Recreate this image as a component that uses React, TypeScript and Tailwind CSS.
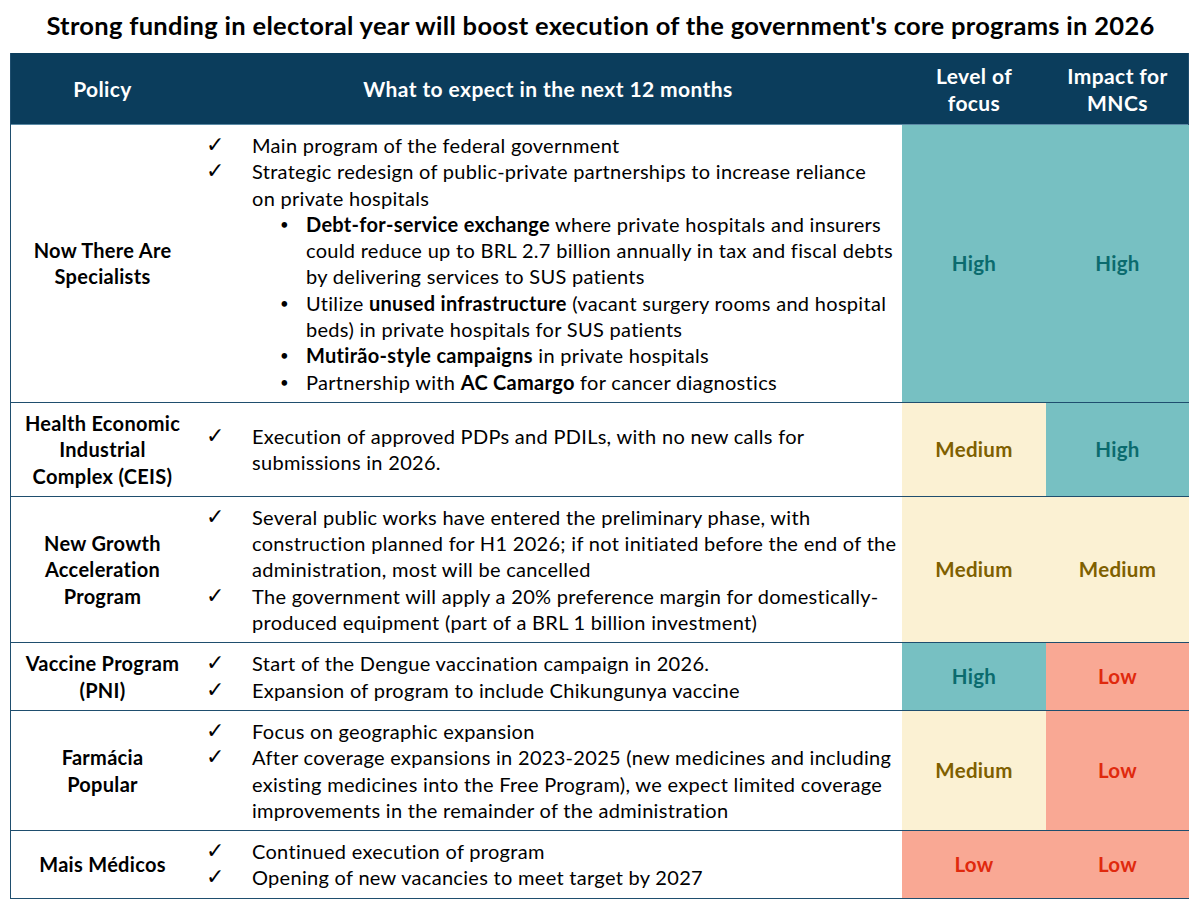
import React from "react";

type Level = "High" | "Medium" | "Low";

type Item = {
  kind: "check" | "bullet";
  lines: React.ReactNode[];
};

type Row = {
  policy: string[];
  focus: Level;
  impact: Level;
  items: Item[];
};

const levelStyle: Record<Level, string> = {
  High: "bg-[#77c0c2] text-[#0b6b6e]",
  Medium: "bg-[#fbf1d3] text-[#7f6000]",
  Low: "bg-[#f9a894] text-[#e0290d]",
};

const rows: Row[] = [
  {
    policy: ["Now There Are", "Specialists"],
    focus: "High",
    impact: "High",
    items: [
      { kind: "check", lines: ["Main program of the federal government"] },
      {
        kind: "check",
        lines: [
          "Strategic redesign of public-private partnerships to increase reliance",
          "on private hospitals",
        ],
      },
      {
        kind: "bullet",
        lines: [
          <>
            <b>Debt-for-service exchange</b> where private hospitals and insurers
          </>,
          "could reduce up to BRL 2.7 billion annually in tax and fiscal debts",
          "by delivering services to SUS patients",
        ],
      },
      {
        kind: "bullet",
        lines: [
          <>
            Utilize <b>unused infrastructure</b> (vacant surgery rooms and hospital
          </>,
          "beds) in private hospitals for SUS patients",
        ],
      },
      {
        kind: "bullet",
        lines: [
          <>
            <b>Mutirão-style campaigns</b> in private hospitals
          </>,
        ],
      },
      {
        kind: "bullet",
        lines: [
          <>
            Partnership with <b>AC Camargo</b> for cancer diagnostics
          </>,
        ],
      },
    ],
  },
  {
    policy: ["Health Economic", "Industrial", "Complex (CEIS)"],
    focus: "Medium",
    impact: "High",
    items: [
      {
        kind: "check",
        lines: [
          "Execution of approved PDPs and PDILs, with no new calls for",
          "submissions in 2026.",
        ],
      },
    ],
  },
  {
    policy: ["New Growth", "Acceleration", "Program"],
    focus: "Medium",
    impact: "Medium",
    items: [
      {
        kind: "check",
        lines: [
          "Several public works have entered the preliminary phase, with",
          "construction planned for H1 2026; if not initiated before the end of the",
          "administration, most will be cancelled",
        ],
      },
      {
        kind: "check",
        lines: [
          "The government will apply a 20% preference margin for domestically-",
          "produced equipment (part of a BRL 1 billion investment)",
        ],
      },
    ],
  },
  {
    policy: ["Vaccine Program", "(PNI)"],
    focus: "High",
    impact: "Low",
    items: [
      { kind: "check", lines: ["Start of the Dengue vaccination campaign in 2026."] },
      { kind: "check", lines: ["Expansion of program to include Chikungunya vaccine"] },
    ],
  },
  {
    policy: ["Farmácia", "Popular"],
    focus: "Medium",
    impact: "Low",
    items: [
      { kind: "check", lines: ["Focus on geographic expansion"] },
      {
        kind: "check",
        lines: [
          "After coverage expansions in 2023-2025 (new medicines and including",
          "existing medicines into the Free Program), we expect limited coverage",
          "improvements in the remainder of the administration",
        ],
      },
    ],
  },
  {
    policy: ["Mais Médicos"],
    focus: "Low",
    impact: "Low",
    items: [
      { kind: "check", lines: ["Continued execution of program"] },
      { kind: "check", lines: ["Opening of new vacancies to meet target by 2027"] },
    ],
  },
];

const ItemView = ({ item }: { item: Item }) => {
  if (item.kind === "check") {
    return (
      <div className="flex">
        <span className="w-[58px] shrink-0 pl-[12px] font-['DejaVu_Sans'] text-[22px] leading-[26.3px] tracking-normal">
          ✓
        </span>
        <div>
          {item.lines.map((l, i) => (
            <div key={i} className="whitespace-nowrap">
              {l}
            </div>
          ))}
        </div>
      </div>
    );
  }
  return (
    <div className="flex pl-[58px]">
      <span className="w-[54px] shrink-0 pl-[28px] text-[15px] leading-[26.3px] tracking-normal">•</span>
      <div>
        {item.lines.map((l, i) => (
          <div key={i} className="whitespace-nowrap">
            {l}
          </div>
        ))}
      </div>
    </div>
  );
};

const LevelCell = ({ level }: { level: Level }) => (
  <div
    className={`flex items-center justify-center font-bold text-[20.5px] tracking-[0.3px] ${levelStyle[level]}`}
  >
    {level}
  </div>
);

export default function App() {
  return (
    <div className="w-[1201px] h-[910px] bg-white font-['Lato',sans-serif] text-black">
      <h1 className="h-[53px] flex items-center justify-center pb-[2px] text-center text-[25.5px] tracking-[0.3px] font-bold">
        Strong funding in electoral year will boost execution of the government's core programs in 2026
      </h1>
      <div className="mx-[10px] w-[1179px] border-x border-b border-[#1f4e6e]">
        <div className="grid grid-cols-[183px_708px_144px_143px] h-[72px] bg-[#0b3d5c] text-white text-[21px] tracking-[0.4px] font-bold leading-[27px] border-b border-[#5b8aa5]">
          <div className="flex items-center justify-center">Policy</div>
          <div className="flex items-center justify-center">
            What to expect in the next 12 months
          </div>
          <div className="flex items-center justify-center text-center">
            Level of
            <br />
            focus
          </div>
          <div className="flex items-center justify-center text-center">
            Impact for
            <br />
            MNCs
          </div>
        </div>
        {rows.map((row, idx) => (
          <div
            key={idx}
            className={`grid grid-cols-[183px_708px_144px_143px] text-[20px] tracking-[0.3px] leading-[26.3px] ${
              idx > 0 ? "border-t border-[#1f4e6e]" : ""
            }`}
          >
            <div className="flex flex-col items-center justify-center py-[7px] text-center font-bold">
              {row.policy.map((p) => (
                <div key={p}>{p}</div>
              ))}
            </div>
            <div className="flex flex-col justify-center py-[7px]">
              {row.items.map((it, i) => (
                <ItemView key={i} item={it} />
              ))}
            </div>
            <LevelCell level={row.focus} />
            <LevelCell level={row.impact} />
          </div>
        ))}
      </div>
    </div>
  );
}
